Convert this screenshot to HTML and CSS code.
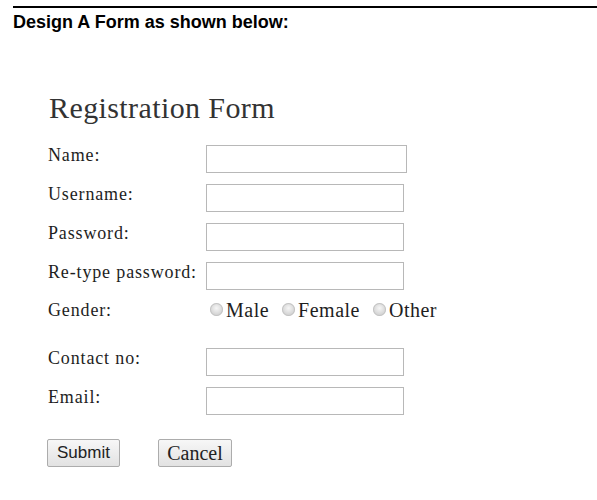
FILE: index.html
```html
<!DOCTYPE html>
<html>
<head>
<meta charset="utf-8">
<link rel="stylesheet" href="styles.css">
</head>
<body>
<div class="task">
  <h2 class="task-title">Design A Form as shown below:</h2>
</div>
<div class="form-wrap">
  <h1 class="form-title">Registration Form</h1>
  <form class="form">
    <label class="lbl">Name:</label>
    <input class="field field-wide" type="text">
    <label class="lbl">Username:</label>
    <input class="field" type="text">
    <label class="lbl">Password:</label>
    <input class="field" type="password">
    <label class="lbl">Re-type password:</label>
    <input class="field" type="password">
    <label class="lbl lbl-gender">Gender:</label>
    <div class="radios">
      <span class="opt"><span class="radio"></span>Male</span>
      <span class="opt"><span class="radio"></span>Female</span>
      <span class="opt"><span class="radio"></span>Other</span>
    </div>
    <label class="lbl">Contact no:</label>
    <input class="field" type="text">
    <label class="lbl">Email:</label>
    <input class="field" type="text">
  </form>
  <div class="buttons">
    <button class="btn btn-submit" type="button">Submit</button>
    <button class="btn btn-cancel" type="button">Cancel</button>
  </div>
</div>
</body>
</html>
```
FILE: styles.css
```css
html, body {
  margin: 0;
  padding: 0;
  background: #fff;
}
body {
  width: 597px;
  height: 500px;
  overflow: hidden;
}
.task {
  margin: 6px 0 0 13px;
  border-top: 2px solid #000;
}
.task-title {
  margin: 0;
  padding-top: 3px;
  font-family: "Liberation Sans", Arial, sans-serif;
  font-weight: bold;
  font-size: 18px;
  line-height: 22px;
  color: #000;
}
.form-wrap {
  padding: 57px 0 0 48px;
  font-family: "Liberation Serif", "Times New Roman", serif;
  color: #1e1e1e;
}
.form-title {
  margin: 0 0 19px 1px;
  font-weight: normal;
  font-size: 30px;
  letter-spacing: 0.4px;
  line-height: 36px;
  color: #333;
}
.form {
  display: grid;
  grid-template-columns: 158px auto;
  row-gap: 11px;
  align-items: start;
}
.lbl {
  font-size: 18px;
  letter-spacing: 0.85px;
  line-height: 18px;
  padding-top: 1px;
}
.field {
  box-sizing: border-box;
  width: 198px;
  height: 28px;
  border: 1px solid #b8b8b8;
  background: #fff;
  margin: 0;
  justify-self: start;
}
.field-wide {
  width: 201px;
}
.lbl-gender {
  padding-top: 0;
  margin-bottom: 18px;
}
.radios {
  display: flex;
  gap: 13px;
  padding-left: 4px;
  margin-top: -2px;
  font-size: 20px;
  letter-spacing: 0.5px;
  line-height: 22px;
}
.opt {
  display: inline-flex;
  align-items: center;
}
.radio {
  display: inline-block;
  width: 13px;
  height: 13px;
  border-radius: 50%;
  margin-right: 3px;
  margin-top: -2px;
  background: radial-gradient(circle at 50% 40%, #f6f6f6 0%, #d6d6d6 60%, #bcbcbc 100%);
  box-shadow: inset 0 0 0 1px #c4c4c4;
}
.buttons {
  display: flex;
  gap: 38px;
  margin-top: 24px;
  margin-left: -1px;
}
.btn {
  box-sizing: border-box;
  height: 28px;
  padding: 0 4px;
  border: 1px solid #acacac;
  border-radius: 2px;
  background: linear-gradient(#f7f7f7, #e2e2e2);
  color: #222;
}
.btn-submit {
  width: 73px;
  font-family: "Liberation Sans", Arial, sans-serif;
  font-size: 17px;
}
.btn-cancel {
  width: 74px;
  font-family: "Liberation Serif", "Times New Roman", serif;
  font-size: 20px;
}
```
